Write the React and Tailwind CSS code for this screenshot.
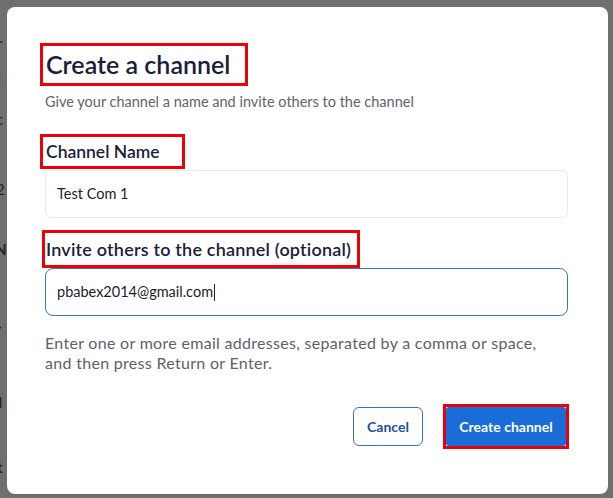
import React from "react";

const font = { fontFamily: "Lato, 'Open Sans', sans-serif" };

export default function App() {
  return (
    <div
      className="relative w-[613px] h-[498px] bg-[#6f6f6f] overflow-hidden"
      style={font}
    >
      {/* bits of the page behind the overlay */}
      <div className="absolute left-0 top-0 w-[7px] h-full text-[#222] text-[15px] leading-none">
        <span className="absolute -left-[3px] top-[36px]">r</span>
        <span className="absolute -left-[3px] top-[72px]">I</span>
        <span className="absolute -left-[4px] top-[112px]">c</span>
        <span className="absolute -left-[4px] top-[182px]">2</span>
        <span className="absolute -left-[5px] top-[242px] font-bold">N</span>
        <span className="absolute -left-[4px] top-[322px]">r</span>
        <span className="absolute -left-[4px] top-[340px]">I</span>
        <span className="absolute -left-[6px] top-[395px]">d</span>
        <span className="absolute -left-[3px] top-[460px] font-bold">t</span>
      </div>

      <div className="absolute left-[7px] top-[7px] w-[601px] h-[487px] bg-white rounded-[8px] pl-[38px] pr-[40px] pt-[36px] flex flex-col items-stretch">
        <div className="self-start -ml-[5px] border-[3px] border-[#e8000b] pl-[3px] pr-[15px] pt-[4px] pb-[5px]">
          <h1 className="text-[25px] leading-[28px] font-semibold text-[#1b1d3a]">
            Create a channel
          </h1>
        </div>
        <p className="mt-[8px] text-[14.5px] leading-[16px] text-[#62636f]">
          Give your channel a name and invite others to the channel
        </p>

        <div className="self-start mt-[24px] -ml-[5px] border-[3px] border-[#e8000b] pl-[3px] pr-[22px] pt-[3px] pb-[3px]">
          <span className="block text-[17.5px] leading-[23px] font-semibold text-[#1b1d3a]">
            Channel Name
          </span>
        </div>
        <div className="mt-[1px] h-[48px] border border-[#e9e9ec] rounded-[6px] flex items-center pl-[11px] text-[14.5px] text-[#1d1d2c]">
          Test Com 1
        </div>

        <div className="self-start mt-[12px] -ml-[3px] border-[3px] border-[#e8000b] pl-[1px] pr-[6px] pt-[4px] pb-[4px]">
          <span className="block text-[18px] leading-[24px] tracking-[0.2px] font-semibold text-[#1b1d3a]">
            Invite others to the channel (optional)
          </span>
        </div>
        <div className="h-[48px] border-[1.5px] border-[#3b73c9] rounded-[8px] flex items-center pl-[11px] text-[14.5px] text-[#1d1d2c]">
          <span>pbabex2014@gmail.com</span>
          <span className="w-[1px] h-[17px] bg-[#1d1d2c] ml-[1px]" />
        </div>

        <p className="mt-[17px] max-w-[505px] text-[16px] leading-[20px] tracking-[0.3px] text-[#5f606d]">
          Enter one or more email addresses, separated by a comma or space,
          and then press Return or Enter.
        </p>

        <div className="mt-[31px] flex justify-end items-center gap-[20px] -mr-[1px]">
          <button className="h-[39px] w-[70px] border border-[#3b6fc0] rounded-[6px] text-[14px] font-bold text-[#234f9c] bg-white">
            Cancel
          </button>
          <div className="border-[3px] border-[#e8000b] bg-white">
            <button className="block h-[39px] w-[120px] bg-[#1a6dd6] rounded-[3px] text-[14px] font-bold text-white">
              Create channel
            </button>
          </div>
        </div>
      </div>
    </div>
  );
}
